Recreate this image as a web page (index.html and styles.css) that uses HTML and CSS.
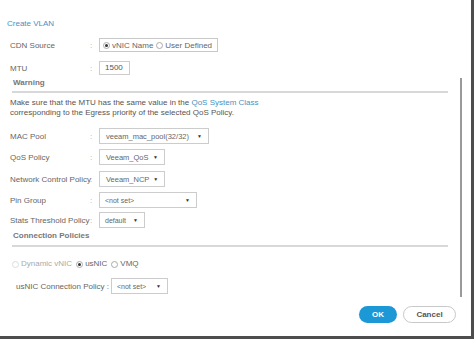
FILE: index.html
```html
<!DOCTYPE html>
<html>
<head>
	<title>Create VLAN</title>
	<link rel="stylesheet" href="styles.css">
</head>

<body>
	<div class="dialog">
		<div class="title">Create VLAN</div>

		<div class="row row-cdn">
			<span class="label">CDN Source</span>
			<span class="colon">:</span>
			<div class="radio-box">
				<span class="radio checked"></span><span class="opt">vNIC Name</span>
				<span class="radio"></span><span class="opt">User Defined</span>
			</div>
		</div>

		<div class="row row-mtu">
			<span class="label">MTU</span>
			<span class="colon">:</span>
			<div class="text-box">1500</div>
		</div>

		<div class="section warning">Warning</div>
		<div class="rule"></div>
		<p class="note">Make sure that the MTU has the same value in the <span class="link">QoS System Class</span><br>corresponding to the Egress priority of the selected QoS Policy.</p>

		<div class="row row-mac">
			<span class="label">MAC Pool</span>
			<span class="colon">:</span>
			<div class="select w-mac"><span>veeam_mac_pool(32/32)</span><span class="arrow">▼</span></div>
		</div>

		<div class="row row-qos">
			<span class="label">QoS Policy</span>
			<span class="colon">:</span>
			<div class="select w-qos"><span>Veeam_QoS</span><span class="arrow">▼</span></div>
		</div>

		<div class="row row-ncp">
			<span class="label">Network Control Policy</span>
			<span class="colon">:</span>
			<div class="select w-qos"><span>Veeam_NCP</span><span class="arrow">▼</span></div>
		</div>

		<div class="row row-pin">
			<span class="label">Pin Group</span>
			<span class="colon">:</span>
			<div class="select small w-pin"><span>&lt;not set&gt;</span><span class="arrow">▼</span></div>
		</div>

		<div class="row row-stats">
			<span class="label">Stats Threshold Policy</span>
			<span class="colon">:</span>
			<div class="select small w-stats"><span>default</span><span class="arrow">▼</span></div>
		</div>

		<div class="section conn">Connection Policies</div>
		<div class="rule"></div>

		<div class="radios">
			<span class="radio disabled"></span><span class="opt disabled">Dynamic vNIC</span>
			<span class="radio checked"></span><span class="opt">usNIC</span>
			<span class="radio"></span><span class="opt">VMQ</span>
		</div>

		<div class="row row-usnic">
			<span class="usnic-label">usNIC Connection Policy :</span>
			<div class="select small w-usnic"><span>&lt;not set&gt;</span><span class="arrow">▼</span></div>
		</div>

		<div class="buttons">
			<button class="btn ok">OK</button>
			<button class="btn cancel">Cancel</button>
		</div>

		<div class="scrollbar"></div>
	</div>
</body>

</html>
```

FILE: styles.css
```css
html,
body {
	margin: 0;
	padding: 0;
	background: #fff;
}

body {
	font-family: "Liberation Sans", Arial, sans-serif;
	font-size: 8px;
	color: #666;
}

.dialog {
	position: relative;
	width: 471px;
	height: 336px;
	border-right: 3px solid #4d4d4d;
	border-bottom: 3px solid #4d4d4d;
	display: flex;
	flex-direction: column;
	box-sizing: content-box;
}

.title {
	padding: 17px 0 0 7px;
	line-height: 14px;
	color: #4a90c2;
}

.row {
	display: flex;
	align-items: center;
	height: 16px;
	padding-left: 10px;
}

.label {
	width: 80px;
	white-space: nowrap;
}

.colon {
	width: 9px;
	color: #aaa;
}

.row-cdn { margin-top: 6px; }
.row-mtu { margin-top: 7px; }
.row-mac { margin-top: 10px; }
.row-qos { margin-top: 5px; }
.row-ncp { margin-top: 6px; }
.row-pin { margin-top: 5px; }
.row-stats { margin-top: 4px; }
.row-usnic { margin-top: 8px; padding-left: 16px; }

.radio-box {
	display: flex;
	align-items: center;
	height: 14px;
	width: 119px;
	box-sizing: border-box;
	border: 1px solid #c8c8c8;
	padding-left: 3px;
}

.radio {
	width: 7px;
	height: 7px;
	border: 1px solid #aaa;
	border-radius: 50%;
	box-sizing: border-box;
	display: inline-flex;
	align-items: center;
	justify-content: center;
	margin-right: 2px;
}

.radio.checked::after {
	content: "";
	width: 3px;
	height: 3px;
	border-radius: 50%;
	background: #333;
}

.radio.disabled {
	border-color: #ddd;
}

.opt {
	margin-right: 3px;
	color: #666;
}

.opt.disabled {
	color: #aaa;
}

.text-box {
	width: 31px;
	height: 14px;
	box-sizing: border-box;
	border: 1px solid #ccc;
	padding-left: 5px;
	line-height: 12px;
	color: #555;
}

.section {
	padding-left: 13px;
	line-height: 12px;
	font-weight: bold;
	color: #777;
}

.warning { margin-top: 1px; }
.conn { margin-top: 2px; }

.rule {
	margin: 2px 23px 0 12px;
	height: 2px;
	background: #d8d8d8;
}

.conn + .rule { margin-top: 3px; }

.note {
	margin: 5px 0 0 10px;
	line-height: 10px;
	color: #555;
}

.link {
	color: #4a90c2;
}

.select {
	display: flex;
	align-items: center;
	justify-content: space-between;
	height: 16px;
	box-sizing: border-box;
	border: 1px solid #ccc;
	padding: 0 6px 0 6px;
	font-size: 7.5px;
	color: #666;
	white-space: nowrap;
}

.select.small {
	font-size: 7px;
	padding-left: 5px;
}

.arrow {
	font-size: 5px;
	color: #333;
	margin-left: 4px;
}

.w-mac { width: 110px; }
.w-qos { width: 66px; }
.w-pin { width: 98px; }
.w-stats { width: 46px; }
.w-usnic { width: 57px; }

.usnic-label {
	width: 95px;
	white-space: nowrap;
}

.radios {
	display: flex;
	align-items: center;
	margin: 11px 0 0 12px;
	line-height: 12px;
}

.radios .opt {
	margin-right: 4px;
}

.buttons {
	margin-top: auto;
	margin-bottom: 13px;
	display: flex;
	justify-content: flex-end;
	gap: 6px;
	padding-right: 15px;
}

.btn {
	height: 17px;
	border-radius: 9px;
	font-family: "Liberation Sans", Arial, sans-serif;
	font-size: 8px;
	font-weight: bold;
	padding: 0;
	cursor: pointer;
}

.ok {
	width: 38px;
	background: #1d98d6;
	border: none;
	color: #fff;
}

.cancel {
	width: 53px;
	background: #fff;
	border: 1px solid #c8c8c8;
	color: #555;
}

.scrollbar {
	position: absolute;
	left: 460px;
	top: 78px;
	width: 2px;
	height: 219px;
	background: #9a9a9a;
}
```
